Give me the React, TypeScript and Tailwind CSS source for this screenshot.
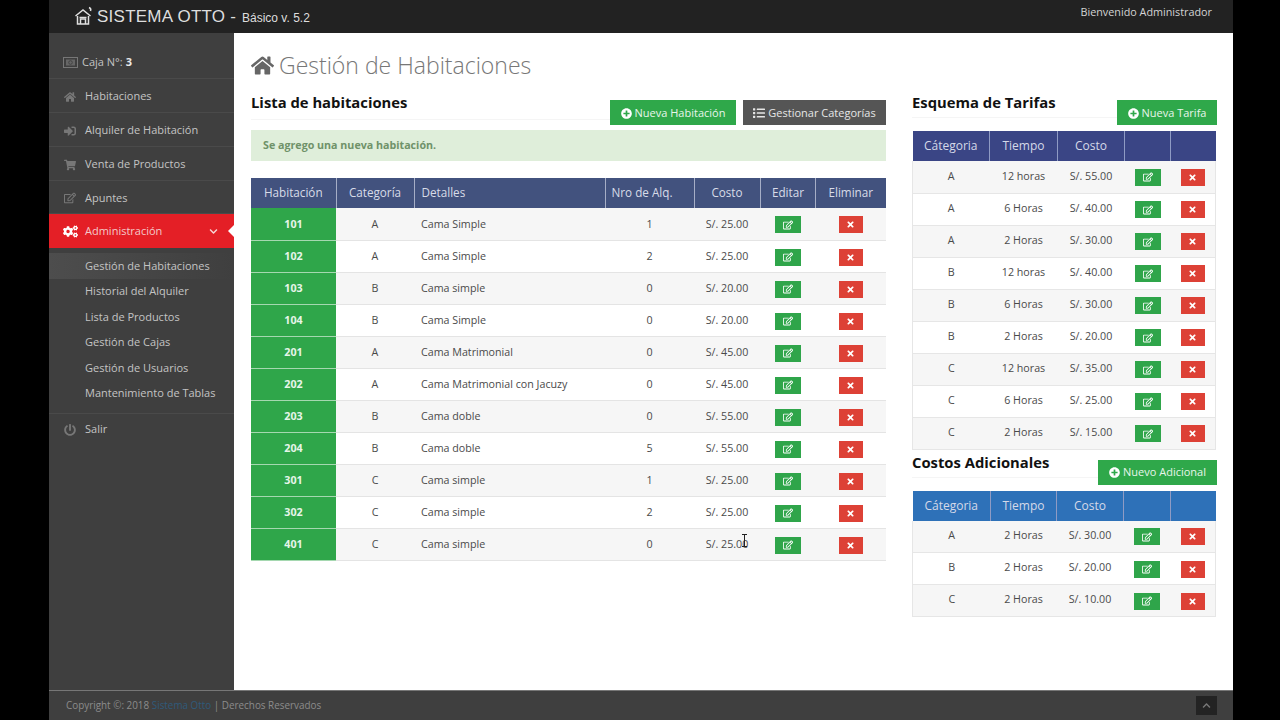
import { FaHome, FaSignInAlt, FaShoppingCart, FaRegEdit, FaCogs, FaChevronDown, FaPowerOff, FaPlusCircle, FaList, FaTimes, FaChevronUp } from 'react-icons/fa';
import type { ComponentType, ReactNode } from 'react';

const OPEN = "font-['Open_Sans',sans-serif]";

const rooms = [
  ['101', 'A', 'Cama Simple', '1', '25.00'],
  ['102', 'A', 'Cama Simple', '2', '25.00'],
  ['103', 'B', 'Cama simple', '0', '20.00'],
  ['104', 'B', 'Cama Simple', '0', '20.00'],
  ['201', 'A', 'Cama Matrimonial', '0', '45.00'],
  ['202', 'A', 'Cama Matrimonial con Jacuzy', '0', '45.00'],
  ['203', 'B', 'Cama doble', '0', '55.00'],
  ['204', 'B', 'Cama doble', '5', '55.00'],
  ['301', 'C', 'Cama simple', '1', '25.00'],
  ['302', 'C', 'Cama simple', '2', '25.00'],
  ['401', 'C', 'Cama simple', '0', '25.00'],
];

const tarifas = [
  ['A', '12 horas', '55.00'],
  ['A', '6 Horas', '40.00'],
  ['A', '2 Horas', '30.00'],
  ['B', '12 horas', '40.00'],
  ['B', '6 Horas', '30.00'],
  ['B', '2 Horas', '20.00'],
  ['C', '12 horas', '35.00'],
  ['C', '6 Horas', '25.00'],
  ['C', '2 Horas', '15.00'],
];

const adicionales = [
  ['A', '2 Horas', '30.00'],
  ['B', '2 Horas', '20.00'],
  ['C', '2 Horas', '10.00'],
];

const subItems = [
  'Gestión de Habitaciones',
  'Historial del Alquiler',
  'Lista de Productos',
  'Gestión de Cajas',
  'Gestión de Usuarios',
  'Mantenimiento de Tablas',
];

function MenuRow({ icon: Icon, label, short }: { icon: ComponentType<{ className?: string }>; label: string; short?: boolean }) {
  return (
    <div className={`flex items-center border-b border-[#4a4a4a] pl-[15px] pt-[2px] text-[#c4c4c4] ${short ? 'h-[33px]' : 'h-[34px]'}`}>
      <span className="flex w-[21px]"><Icon className="text-[12px] text-[#777]" /></span>
      <span>{label}</span>
    </div>
  );
}

function EditBtn() {
  return (
    <span className="inline-flex h-[17px] w-[26px] items-center justify-center bg-[#2fa54a] text-white">
      <FaRegEdit className="text-[10px]" />
    </span>
  );
}

function DelBtn() {
  return (
    <span className="inline-flex h-[17px] w-[24px] items-center justify-center bg-[#dd4136] text-white">
      <FaTimes className="text-[9px]" />
    </span>
  );
}

function GreenBtn({ children, className = '' }: { children: ReactNode; className?: string }) {
  return (
    <span className={`flex h-[25px] shrink-0 items-center justify-center gap-[3px] bg-[#2fa84a] pt-[1px] text-[#e8f5ea] ${className}`}>
      <FaPlusCircle className="text-[11px] text-white" />
      {children}
    </span>
  );
}

function SideTable({ head, rows, cols }: { head: string; rows: string[][]; cols: string[] }) {
  return (
    <table className="ml-[1px] w-[303px] table-fixed border-collapse text-[10.7px] text-[#4a4a4a]">
      <colgroup>
        {cols.map((c, i) => <col key={i} className={c} />)}
      </colgroup>
      <thead>
        <tr className={`h-[30px] text-[12px] font-normal text-[#d5d9e8] ${head}`}>
          {['Cátegoria', 'Tiempo', 'Costo', '', ''].map((h, i) => (
            <th key={i} className="border-l border-[#8f9bc4] font-normal first:border-l-0">{h}</th>
          ))}
        </tr>
      </thead>
      <tbody>
        {rows.map((r, i) => (
          <tr key={i} className={`h-[32px] border-b border-[#e6e6e6] text-center ${i % 2 === 0 ? 'bg-[#f6f6f6]' : 'bg-white'}`}>
            <td className="border-l border-[#e6e6e6] pb-[2px]">{r[0]}</td>
            <td className="pb-[2px]">{r[1]}</td>
            <td className="pb-[2px]">S/. {r[2]}</td>
            <td><div className="flex justify-center pt-[1px]"><EditBtn /></div></td>
            <td className="border-r border-[#e6e6e6]"><div className="flex justify-center pt-[1px]"><DelBtn /></div></td>
          </tr>
        ))}
      </tbody>
    </table>
  );
}

export default function App() {
  const tableCols = ['w-[85px]', 'w-[78px]', 'w-[191px]', 'w-[89px]', 'w-[66px]', 'w-[55px]', 'w-[71px]'];
  return (
    <div className={`flex h-screen justify-start overflow-hidden bg-black pl-[49px] text-[11px] ${OPEN}`}>
      <div className="relative flex w-[1184px] flex-col bg-[#3f3f3f]">
        {/* top bar */}
        <header className="flex h-[33px] shrink-0 items-center justify-between bg-[#222] pl-[25px] pr-[21px]">
          <div className="flex items-center font-['Liberation_Sans',sans-serif] text-[#dedede]">
            <svg width="20" height="20" viewBox="0 0 20 20" fill="none" stroke="#e0e0e0" strokeWidth="1.5" className="mb-[2px]">
              <path d="M1.5 10 L9 4 L16.5 10" />
              <path d="M3.5 10 V18 H14.5 V10" />
              <path d="M6.5 18 V13 H11.5 V18" />
              <path d="M5.5 11.5 H12.5" />
              <path d="M15 1.5 Q17.5 2.5 16.5 5" />
            </svg>
            <span className="ml-[3px] text-[17px] tracking-[0.25px]">SISTEMA OTTO</span>
            <span className="ml-[5px] text-[17px]">-</span>
            <span className="ml-[6px] mt-[2px] text-[12px]">Básico v. 5.2</span>
          </div>
          <span className="mb-[8px] text-[10.8px] text-[#d4d4d4]">Bienvenido Administrador</span>
        </header>

        <div className="flex min-h-0 flex-1">
          {/* sidebar */}
          <aside className="w-[185px] shrink-0 pt-[12px]">
            <div className="flex h-[34px] items-center border-b border-[#4a4a4a] pl-[14px] pt-[2px] text-[#c4c4c4]">
              <svg width="15" height="11" viewBox="0 0 15 11" fill="none" stroke="#777" className="mr-[4px]">
                <rect x="0.5" y="0.5" width="14" height="10" />
                <rect x="3" y="2.5" width="9" height="6" fill="#666" stroke="none" />
                <circle cx="7.5" cy="5.5" r="1.8" stroke="#444" />
              </svg>
              Caja N°: <b className="ml-[3px] text-[#e8e8e8]">3</b>
            </div>
            <MenuRow icon={FaHome} label="Habitaciones" />
            <MenuRow icon={FaSignInAlt} label="Alquiler de Habitación" />
            <MenuRow icon={FaShoppingCart} label="Venta de Productos" />
            <MenuRow icon={FaRegEdit} label="Apuntes" short />
            <div className="relative flex h-[34px] items-center bg-[#e41f26] pl-[14px] pr-[16px] text-[#f3c9c9]">
              <FaCogs className="mr-[7px] text-[15px] text-white" />
              <span className="flex-1">Administración</span>
              <FaChevronDown className="text-[9px] text-[#f6d5d5]" />
              <span className="absolute right-0 top-[11px] h-0 w-0 border-y-[6px] border-r-[6px] border-y-transparent border-r-white" />
            </div>
            <div className="border-b border-[#4a4a4a] pb-[7px] pt-[5px] text-[#c4c4c4]">
              {subItems.map((s, i) => (
                <div key={s} className={`flex h-[25.5px] items-center pl-[36px] ${i === 0 ? 'bg-linear-to-r from-[#4d4d4d] to-[#3f3f3f]' : ''}`}>{s}</div>
              ))}
            </div>
            <div className="flex h-[31px] items-center pl-[15px] text-[#c4c4c4]">
              <span className="flex w-[21px]"><FaPowerOff className="text-[12px] text-[#777]" /></span>
              Salir
            </div>
          </aside>

          {/* content */}
          <main className="relative flex flex-1 flex-col bg-white pl-[17px] pr-[16px] pt-[17px]">
            <h1 className="flex h-[30px] items-center text-[23px] font-light text-[#777]">
              <FaHome className="mr-[5px] text-[23px] text-[#666]" />
              Gestión de Habitaciones
            </h1>

            <div className="mt-[8px] flex justify-between">
              <section className="w-[635px]">
                <div className="flex h-[37px] justify-between">
                  <h2 className="h-[32px] flex-1 border-b border-[#f5f5f5] text-[14.8px] font-bold leading-[28px] text-[#111]">Lista de habitaciones</h2>
                  <div className="flex items-end gap-[7px]">
                    <GreenBtn className="w-[126px]">Nueva Habitación</GreenBtn>
                    <span className="flex h-[25px] w-[143px] items-center justify-center gap-[3px] bg-[#555] pt-[1px] text-[#e6e6e6]">
                      <FaList className="text-[12px]" />
                      Gestionar Categorías
                    </span>
                  </div>
                </div>
                <div className="mt-[5px] flex h-[31px] items-center bg-[#dfeeda] pl-[12px] text-[10.7px] font-bold text-[#6f9269]">
                  Se agrego una nueva habitación.
                </div>
                <table className="mt-[17px] w-[635px] table-fixed border-collapse text-[10.7px] text-[#4a4a4a]">
                  <colgroup>
                    {tableCols.map((c, i) => <col key={i} className={c} />)}
                  </colgroup>
                  <thead>
                    <tr className="h-[30px] bg-[#42527e] text-[11.7px] text-[#d8dce8]">
                      <th className="font-normal">Habitación</th>
                      <th className="border-l border-[#a6aec6] font-normal">Categoría</th>
                      <th className="border-l border-[#a6aec6] pl-[7px] text-left font-normal">Detalles</th>
                      <th className="border-l border-[#a6aec6] pr-[15px] font-normal">Nro de Alq.</th>
                      <th className="border-l border-[#a6aec6] font-normal">Costo</th>
                      <th className="border-l border-[#a6aec6] pl-[1px] font-normal">Editar</th>
                      <th className="border-l border-[#a6aec6] font-normal">Eliminar</th>
                    </tr>
                  </thead>
                  <tbody>
                    {rooms.map((r, i) => (
                      <tr key={r[0]} className={`h-[32px] border-b border-[#e4e4e4] ${i % 2 === 0 ? 'bg-[#f6f6f6]' : 'bg-white'}`}>
                        <td className="border-b border-[#a5d8b0] bg-[#2fa64a] text-center font-bold text-[#e6f5e9]">{r[0]}</td>
                        <td className="text-center">{r[1]}</td>
                        <td className="pl-[7px]">{r[2]}</td>
                        <td className="text-center">{r[3]}</td>
                        <td className="text-center">S/. {r[4]}</td>
                        <td><div className="flex justify-center pt-[2px]"><EditBtn /></div></td>
                        <td><div className="flex justify-center pt-[2px]"><DelBtn /></div></td>
                      </tr>
                    ))}
                  </tbody>
                </table>
              </section>

              <section className="w-[306px]">
                <div className="flex h-[37px] justify-between">
                  <h2 className="ml-[1px] h-[30px] flex-1 border-b border-[#f5f5f5] text-[14.8px] font-bold leading-[28px] text-[#111]">Esquema de Tarifas</h2>
                  <GreenBtn className="mt-[12px] w-[100px]">Nueva Tarifa</GreenBtn>
                </div>
                <div className="mt-[6px]">
                  <SideTable head="bg-[#3a4585]" rows={tarifas} cols={['w-[77px]', 'w-[68px]', 'w-[67px]', 'w-[46px]', 'w-[45px]']} />
                </div>
                <div className="flex h-[41px] justify-between">
                  <h2 className="ml-[1px] h-[28px] flex-1 border-b border-[#f5f5f5] text-[14.8px] font-bold leading-[25px] text-[#111]">Costos Adicionales</h2>
                  <GreenBtn className="mt-[10px] w-[119px]">Nuevo Adicional</GreenBtn>
                </div>
                <SideTable head="bg-[#2e71b8]" rows={adicionales} cols={['w-[78px]', 'w-[66px]', 'w-[67px]', 'w-[47px]', 'w-[45px]']} />
              </section>
            </div>

            {/* text cursor */}
            <svg width="7" height="13" viewBox="0 0 7 13" fill="none" stroke="#222" className="absolute left-[507px] top-[501px]">
              <path d="M1 .5 H6 M1 12.5 H6 M3.5 .5 V12.5" />
            </svg>
          </main>
        </div>

        {/* footer */}
        <footer className="flex h-[30px] shrink-0 items-center justify-between border-t border-[#777] pl-[17px] pr-[16px] text-[9.9px] text-[#8c8c8c]">
          <span>Copyright ©: 2018 <span className="text-[#2f5a7a]">Sistema Otto</span> | Derechos Reservados</span>
          <span className="flex h-[19px] w-[21px] items-center justify-center bg-[#232323]">
            <FaChevronUp className="text-[9px] text-[#777]" />
          </span>
        </footer>
      </div>
    </div>
  );
}
